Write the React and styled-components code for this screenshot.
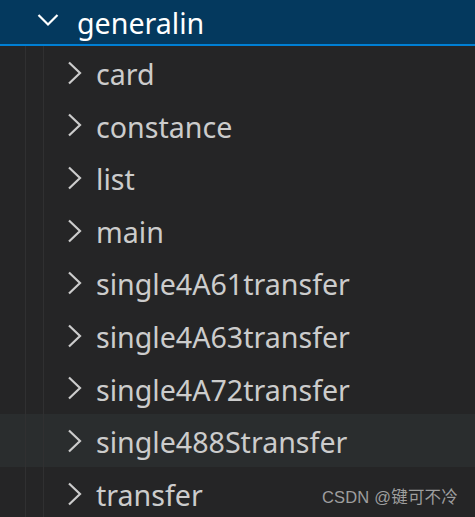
import React from "react"
import styled, { createGlobalStyle } from "styled-components"

const Global = createGlobalStyle`
  html, body {
    margin: 0;
    padding: 0;
    background: #252526;
  }
`

const Tree = styled.div`
  position: relative;
  width: 475px;
  height: 517px;
  overflow: hidden;
  background: #252526;
  font-family: "Noto Sans", "Open Sans", sans-serif;
`

const Guide = styled.div`
  position: absolute;
  top: 46px;
  bottom: 0;
  left: ${({ x }) => x}px;
  width: 1px;
  background: #303031;
  pointer-events: none;
`

const Row = styled.div`
  display: flex;
  align-items: center;
  box-sizing: border-box;
  height: ${({ root }) => (root ? "46px" : "52.6px")};
  padding-left: ${({ depth }) => 37 + depth * 26}px;
  background: ${({ root, hover }) =>
    root ? "#04395e" : hover ? "#2a2d2e" : "transparent"};
  border-bottom: ${({ root }) => (root ? "2px solid #007fd4" : "none")};
  color: ${({ root }) => (root ? "#ffffff" : "#cccccc")};
  font-size: 28.6px;
  white-space: nowrap;
`

const Twistie = styled.span`
  display: flex;
  align-items: center;
  justify-content: center;
  width: 22px;
  height: 24px;
  margin-right: ${({ open }) => (open ? "18px" : "11px")};
  margin-top: ${({ open }) => (open ? "-4px" : "1px")};
`

const Label = styled.span`
  line-height: 1;
  margin-top: ${({ root }) => (root ? "2px" : "4px")};
`

const Watermark = styled.div`
  position: absolute;
  right: 17px;
  bottom: 9px;
  font-family: "Liberation Sans", "Noto Sans CJK SC", sans-serif;
  font-size: 16.5px;
  color: rgba(200, 200, 200, 0.75);
  letter-spacing: 0.2px;
`

const Chevron = ({ open }) =>
  open ? (
    <svg width="22" height="14" viewBox="0 0 22 14">
      <polyline
        points="1.5,2 11,11.5 20.5,2"
        fill="none"
        stroke="#ffffff"
        strokeWidth="2.2"
      />
    </svg>
  ) : (
    <svg width="15" height="24" viewBox="0 0 15 24">
      <polyline
        points="2,1.5 13,12 2,22.5"
        fill="none"
        stroke="#cccccc"
        strokeWidth="2.2"
      />
    </svg>
  )

const folders = [
  "card",
  "constance",
  "list",
  "main",
  "single4A61transfer",
  "single4A63transfer",
  "single4A72transfer",
  "single488Stransfer",
  "transfer",
]

export default function App() {
  return (
    <Tree>
      <Global />
      <Row root depth={0}>
        <Twistie open>
          <Chevron open />
        </Twistie>
        <Label root>generalin</Label>
      </Row>
      {folders.map((name) => (
        <Row key={name} depth={1} hover={name === "single488Stransfer"}>
          <Twistie>
            <Chevron />
          </Twistie>
          <Label>{name}</Label>
        </Row>
      ))}
      <Guide x={25} />
      <Guide x={43} />
      <Watermark>CSDN @键可不冷</Watermark>
    </Tree>
  )
}
